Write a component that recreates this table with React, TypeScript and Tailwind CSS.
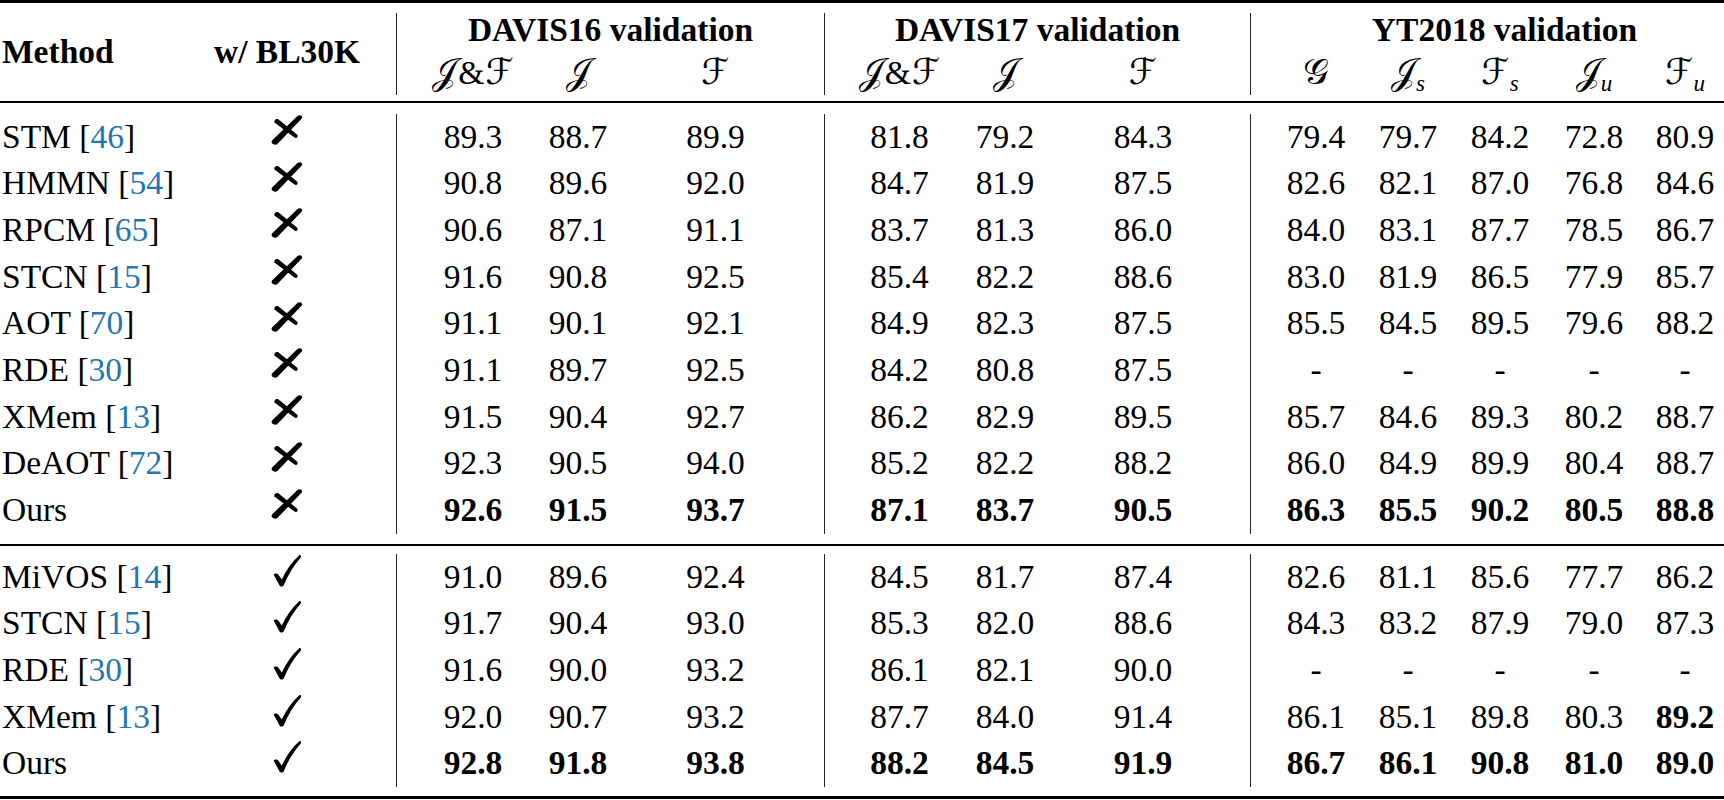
import React from "react";

type Row = {
  name: string;
  cite?: string;
  bl: boolean;
  vals: string[];
  bold?: boolean;
  boldCols?: number[];
};

const group1: Row[] = [
  { name: "STM", cite: "46", bl: false, vals: ["89.3", "88.7", "89.9", "81.8", "79.2", "84.3", "79.4", "79.7", "84.2", "72.8", "80.9"] },
  { name: "HMMN", cite: "54", bl: false, vals: ["90.8", "89.6", "92.0", "84.7", "81.9", "87.5", "82.6", "82.1", "87.0", "76.8", "84.6"] },
  { name: "RPCM", cite: "65", bl: false, vals: ["90.6", "87.1", "91.1", "83.7", "81.3", "86.0", "84.0", "83.1", "87.7", "78.5", "86.7"] },
  { name: "STCN", cite: "15", bl: false, vals: ["91.6", "90.8", "92.5", "85.4", "82.2", "88.6", "83.0", "81.9", "86.5", "77.9", "85.7"] },
  { name: "AOT", cite: "70", bl: false, vals: ["91.1", "90.1", "92.1", "84.9", "82.3", "87.5", "85.5", "84.5", "89.5", "79.6", "88.2"] },
  { name: "RDE", cite: "30", bl: false, vals: ["91.1", "89.7", "92.5", "84.2", "80.8", "87.5", "-", "-", "-", "-", "-"] },
  { name: "XMem", cite: "13", bl: false, vals: ["91.5", "90.4", "92.7", "86.2", "82.9", "89.5", "85.7", "84.6", "89.3", "80.2", "88.7"] },
  { name: "DeAOT", cite: "72", bl: false, vals: ["92.3", "90.5", "94.0", "85.2", "82.2", "88.2", "86.0", "84.9", "89.9", "80.4", "88.7"] },
  { name: "Ours", bl: false, bold: true, vals: ["92.6", "91.5", "93.7", "87.1", "83.7", "90.5", "86.3", "85.5", "90.2", "80.5", "88.8"] },
];

const group2: Row[] = [
  { name: "MiVOS", cite: "14", bl: true, vals: ["91.0", "89.6", "92.4", "84.5", "81.7", "87.4", "82.6", "81.1", "85.6", "77.7", "86.2"] },
  { name: "STCN", cite: "15", bl: true, vals: ["91.7", "90.4", "93.0", "85.3", "82.0", "88.6", "84.3", "83.2", "87.9", "79.0", "87.3"] },
  { name: "RDE", cite: "30", bl: true, vals: ["91.6", "90.0", "93.2", "86.1", "82.1", "90.0", "-", "-", "-", "-", "-"] },
  { name: "XMem", cite: "13", bl: true, boldCols: [10], vals: ["92.0", "90.7", "93.2", "87.7", "84.0", "91.4", "86.1", "85.1", "89.8", "80.3", "89.2"] },
  { name: "Ours", bl: true, bold: true, vals: ["92.8", "91.8", "93.8", "88.2", "84.5", "91.9", "86.7", "86.1", "90.8", "81.0", "89.0"] },
];

// body cell widths, section borders sit on the first cell of each block
const cellCls = [
  "w-[153px] border-l border-[#222]",
  "w-[58px]",
  "w-[217px]",
  "w-[150px] border-l border-[#222]",
  "w-[62px]",
  "w-[214px]",
  "w-[131px] border-l border-[#222]",
  "w-[54px]",
  "w-[130px]",
  "w-[58px]",
  "w-[101px] pl-[23px]",
];

const mathFont = "font-['DejaVu_Serif','DejaVu_Sans',serif] font-normal text-[36px]";

function Cal({ c }: { c: string }) {
  return <span className={mathFont}>{c}</span>;
}

function Amp() {
  return (
    <span className="whitespace-nowrap">
      <Cal c={"\u{1D4A5}"} />
      <span className="mx-[1px]">&amp;</span>
      <Cal c={"\u2131"} />
    </span>
  );
}

function Sub({ c }: { c: string }) {
  return <span className="italic text-[23px] align-[-7px]">{c}</span>;
}

// pifont-style ballot marks
function Cross() {
  return (
    <svg width="32" height="31" viewBox="0 0 32 31" className="mt-[1.5px]">
      <path
        d="M2 29 C 0 28, 0.4 25.8, 1.5 24.9 L 26.5 1.1 C 28.6 -0.6, 31.8 0.6, 31 3.2 L 6.6 28.8 C 5.2 30.3, 3.6 30, 2 29 Z"
        fill="#000"
      />
      <path
        d="M3.4 7.6 C 2.6 5, 5.4 3.1, 7.6 4.4 L 26 19.4 C 27.6 21, 26 23.6, 23.9 22.8 L 3.4 7.6 Z"
        fill="#000"
      />
    </svg>
  );
}

function Check() {
  return (
    <svg width="28" height="32" viewBox="0 0 28 32" className="mt-[1px]">
      <path
        d="M0.6 19.6 C 1.8 17.8, 4.2 18.2, 5.4 19.8 L 8.8 24.6 C 13.4 14.6, 19 6.6, 26 0.4 C 27.4 -0.6, 29 1, 27.8 2.4 C 20.6 10.6, 15 19.6, 10.8 30.2 C 10 31.8, 7.4 32, 6.6 30.4 Z"
        fill="#000"
      />
    </svg>
  );
}

function BodyRow({ row }: { row: Row }) {
  return (
    <div className="flex h-[46.7px] leading-[46.7px]">
      <div className="w-[178px] shrink-0 pl-[2px] whitespace-nowrap">
        {row.name}
        {row.cite && (
          <>
            {" ["}
            <span className="text-[#1f77b4]">{row.cite}</span>
            {"]"}
          </>
        )}
      </div>
      <div className="w-[218px] shrink-0 flex justify-center items-start">
        {row.bl ? <Check /> : <Cross />}
      </div>
      {row.vals.map((v, i) => {
        const b = row.bold || row.boldCols?.includes(i);
        return (
          <div key={i} className={`${cellCls[i]} shrink-0 flex justify-center`}>
            <span className={b ? "font-bold" : ""}>{v}</span>
          </div>
        );
      })}
    </div>
  );
}

export default function App() {
  return (
    <div className="w-[1724px] h-[800px] overflow-hidden bg-white text-black font-['Liberation_Serif','Times_New_Roman',serif] text-[33.5px]">
      <div className="h-[3px] bg-black" />

      {/* header */}
      <div className="flex h-[98px] font-bold">
        <div className="w-[178px] shrink-0 pl-[2px] flex items-center">Method</div>
        <div className="w-[218px] shrink-0 flex items-center justify-center">w/ BL30K</div>

        <div className="w-[428px] shrink-0 mt-[10px] h-[82px] border-l border-[#222]">
          <div className="text-center leading-[34.8px]">DAVIS16 validation</div>
          <div className="flex h-[47.2px] leading-[47.2px] font-normal">
            <div className="w-[152px] flex justify-center"><Amp /></div>
            <div className="w-[58px] flex justify-center"><Cal c={"\u{1D4A5}"} /></div>
            <div className="w-[217px] flex justify-center"><Cal c={"\u2131"} /></div>
          </div>
        </div>

        <div className="w-[426px] shrink-0 mt-[10px] h-[82px] border-l border-[#222]">
          <div className="text-center leading-[34.8px]">DAVIS17 validation</div>
          <div className="flex h-[47.2px] leading-[47.2px] font-normal">
            <div className="w-[149px] flex justify-center"><Amp /></div>
            <div className="w-[62px] flex justify-center"><Cal c={"\u{1D4A5}"} /></div>
            <div className="w-[214px] flex justify-center"><Cal c={"\u2131"} /></div>
          </div>
        </div>

        <div className="w-[474px] shrink-0 mt-[10px] h-[82px] border-l border-[#222]">
          <div className="text-center leading-[34.8px] pl-[34px]">YT2018 validation</div>
          <div className="flex h-[47.2px] leading-[47.2px] font-normal">
            <div className="w-[130px] flex justify-center"><Cal c={"\u{1D4A2}"} /></div>
            <div className="w-[54px] flex justify-center"><span className="whitespace-nowrap"><Cal c={"\u{1D4A5}"} /><Sub c="s" /></span></div>
            <div className="w-[130px] flex justify-center"><span className="whitespace-nowrap"><Cal c={"\u2131"} /><Sub c="s" /></span></div>
            <div className="w-[58px] flex justify-center"><span className="whitespace-nowrap"><Cal c={"\u{1D4A5}"} /><Sub c="u" /></span></div>
            <div className="w-[101px] pl-[23px] flex justify-center"><span className="whitespace-nowrap"><Cal c={"\u2131"} /><Sub c="u" /></span></div>
          </div>
        </div>
      </div>

      <div className="h-[1.5px] bg-black" />

      <div className="mt-[11px]">
        {group1.map((r, i) => (
          <BodyRow key={i} row={r} />
        ))}
      </div>

      <div className="mt-[10.5px] h-[1.5px] bg-black" />

      <div className="mt-[8px]">
        {group2.map((r, i) => (
          <BodyRow key={i} row={r} />
        ))}
      </div>

      <div className="mt-[8.7px] h-[3px] bg-black" />
    </div>
  );
}
